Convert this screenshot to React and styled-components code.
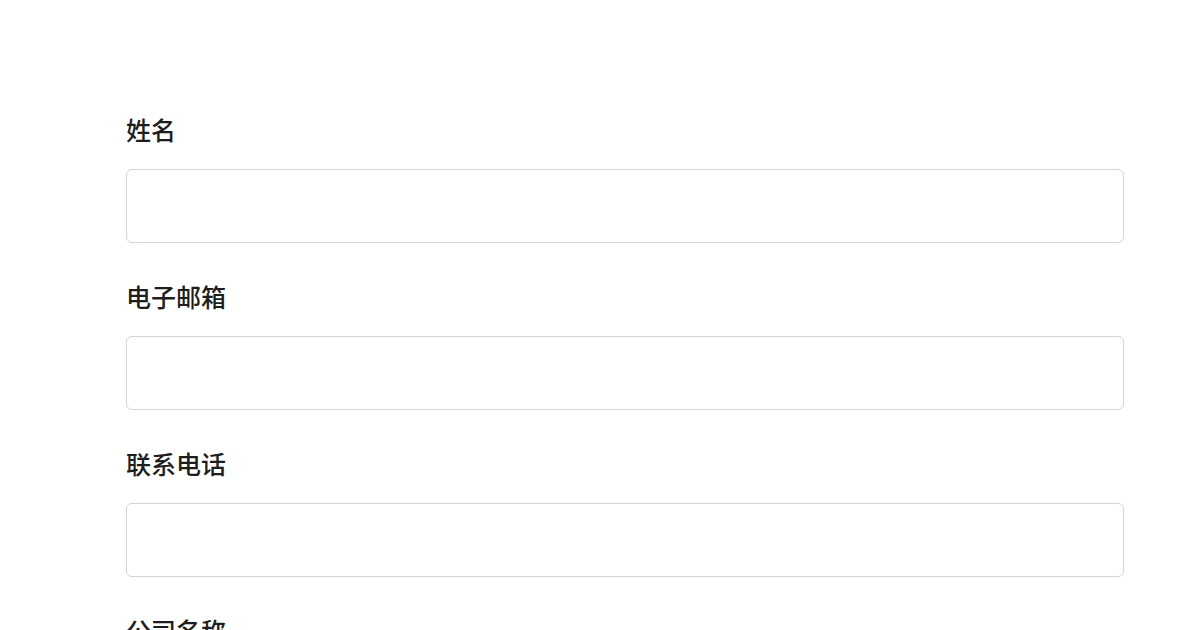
import React from "react";
import styled, { createGlobalStyle } from "styled-components";

const Global = createGlobalStyle`
  html, body { margin: 0; padding: 0; background: #ffffff; }
  body { font-family: "Noto Sans CJK SC", "Noto Sans", "Liberation Sans", sans-serif; color: #222222; }
  * { box-sizing: border-box; }
`;

const Page = styled.main`
  width: 1200px;
  height: 630px;
  overflow: hidden;
  padding: 114px 76px 0 126px;
`;

const Form = styled.form`
  display: flex;
  flex-direction: column;
  gap: 38px;
  width: 998px;
`;

const Field = styled.div`
  display: flex;
  flex-direction: column;
  gap: 21px;
`;

const Label = styled.label`
  display: block;
  font-size: 25px;
  line-height: 30px;
  height: 34px;
  padding-bottom: 4px;
  font-weight: 500;
  color: #1e1e1e;
`;

const Input = styled.input`
  display: block;
  width: 100%;
  height: 74px;
  border: 1px solid #d3d3db;
  border-radius: 6px;
  background: #ffffff;
  padding: 0 16px;
  font-size: 18px;
  font-family: inherit;
  outline: none;
`;

const fields = [
  { id: "name", label: "姓名" },
  { id: "email", label: "电子邮箱" },
  { id: "phone", label: "联系电话" },
  { id: "company", label: "公司名称" },
];

export default function App() {
  return (
    <>
      <Global />
      <Page>
        <Form onSubmit={(e) => e.preventDefault()}>
          {fields.map((f) => (
            <Field key={f.id}>
              <Label htmlFor={f.id}>{f.label}</Label>
              <Input id={f.id} type="text" />
            </Field>
          ))}
        </Form>
      </Page>
    </>
  );
}
